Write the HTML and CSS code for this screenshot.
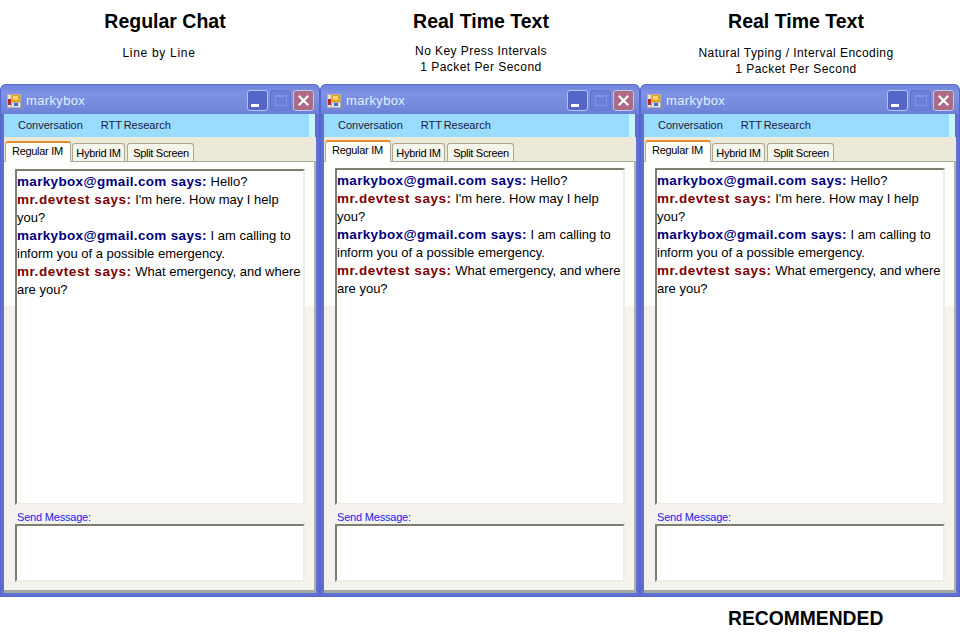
FILE: index.html
```html
<!DOCTYPE html>
<html lang="en">
<head>
<meta charset="utf-8">
<title>Chat comparison</title>
<link rel="stylesheet" href="styles.css">
</head>
<body>
<svg class="defs" width="0" height="0" aria-hidden="true">
  <symbol id="app" viewBox="0 0 14 14">
    <rect x="0" y="0" width="14" height="14" fill="#b9b4a8"/>
    <rect x="1" y="1" width="3" height="12" fill="#e6e2d8"/>
    <rect x="1" y="5" width="3" height="6" fill="#b52a2a"/>
    <rect x="5" y="1" width="8" height="7" fill="#e8a020"/>
    <rect x="6" y="2" width="5" height="4" fill="#fbd77a"/>
    <rect x="5" y="9" width="8" height="4" fill="#dfe4ef"/>
    <rect x="7" y="9" width="4" height="3" fill="#3f6fd0"/>
  </symbol>
</svg>
<main class="page">
  <section class="col col-a">
    <header class="head"><h1>Regular Chat</h1><p>Line by Line</p></header>
    <div class="window">
      <div class="titlebar">
        <svg class="appicon"><use href="#app"/></svg><span class="title">markybox</span>
        <span class="ctl ctl-min"><i></i></span><span class="ctl ctl-max"><i></i></span>
        <span class="ctl ctl-close"><svg viewBox="0 0 20 20"><path d="M5 5L15 15M15 5L5 15"/></svg></span>
      </div>
      <nav class="menubar"><span>Conversation</span><span>RTT Research</span><b></b></nav>
      <div class="tabs"><span class="tab on">Regular IM</span><span class="tab">Hybrid IM</span><span class="tab">Split Screen</span></div>
      <div class="panel">
        <div class="box log">
          <p><b class="me">markybox@gmail.com says:</b> Hello?</p>
          <p><b class="them">mr.devtest says:</b> I'm here. How may I help you?</p>
          <p><b class="me">markybox@gmail.com says:</b> I am calling to inform you of a possible emergency.</p>
          <p><b class="them">mr.devtest says:</b> What emergency, and where are you?</p>
        </div>
        <label class="send">Send Message:</label>
        <div class="box input"></div>
      </div>
    </div>
  </section>
  <section class="col col-b">
    <header class="head"><h1>Real Time Text</h1><p>No Key Press Intervals<br>1 Packet Per Second</p></header>
    <div class="window">
      <div class="titlebar">
        <svg class="appicon"><use href="#app"/></svg><span class="title">markybox</span>
        <span class="ctl ctl-min"><i></i></span><span class="ctl ctl-max"><i></i></span>
        <span class="ctl ctl-close"><svg viewBox="0 0 20 20"><path d="M5 5L15 15M15 5L5 15"/></svg></span>
      </div>
      <nav class="menubar"><span>Conversation</span><span>RTT Research</span><b></b></nav>
      <div class="tabs"><span class="tab on">Regular IM</span><span class="tab">Hybrid IM</span><span class="tab">Split Screen</span></div>
      <div class="panel">
        <div class="box log">
          <p><b class="me">markybox@gmail.com says:</b> Hello?</p>
          <p><b class="them">mr.devtest says:</b> I'm here. How may I help you?</p>
          <p><b class="me">markybox@gmail.com says:</b> I am calling to inform you of a possible emergency.</p>
          <p><b class="them">mr.devtest says:</b> What emergency, and where are you?</p>
        </div>
        <label class="send">Send Message:</label>
        <div class="box input"></div>
      </div>
    </div>
  </section>
  <section class="col col-c">
    <header class="head"><h1>Real Time Text</h1><p>Natural Typing / Interval Encoding<br>1 Packet Per Second</p></header>
    <div class="window">
      <div class="titlebar">
        <svg class="appicon"><use href="#app"/></svg><span class="title">markybox</span>
        <span class="ctl ctl-min"><i></i></span><span class="ctl ctl-max"><i></i></span>
        <span class="ctl ctl-close"><svg viewBox="0 0 20 20"><path d="M5 5L15 15M15 5L5 15"/></svg></span>
      </div>
      <nav class="menubar"><span>Conversation</span><span>RTT Research</span><b></b></nav>
      <div class="tabs"><span class="tab on">Regular IM</span><span class="tab">Hybrid IM</span><span class="tab">Split Screen</span></div>
      <div class="panel">
        <div class="box log">
          <p><b class="me">markybox@gmail.com says:</b> Hello?</p>
          <p><b class="them">mr.devtest says:</b> I'm here. How may I help you?</p>
          <p><b class="me">markybox@gmail.com says:</b> I am calling to inform you of a possible emergency.</p>
          <p><b class="them">mr.devtest says:</b> What emergency, and where are you?</p>
        </div>
        <label class="send">Send Message:</label>
        <div class="box input"></div>
      </div>
    </div>
    <footer class="rec">RECOMMENDED</footer>
  </section>
</main>
</body>
</html>
```
FILE: styles.css
```css
* { box-sizing: border-box; }
html, body { margin: 0; padding: 0; background: #fff; }
body { width: 960px; height: 640px; overflow: hidden; font-family: "Liberation Sans", Arial, sans-serif; color: #000; }
.defs { position: absolute; }
.page { display: flex; width: 960px; }
.col { width: 320px; flex: none; }
.head { height: 84px; padding-top: 10px; text-align: center; }
.col-a .head { padding-left: 10px; }
.col-b .head { padding-left: 2px; }
.col-c .head { margin-right: 8px; }
.head h1 { margin: 0; font-size: 19.5px; line-height: 23px; font-weight: bold; }
.head p { margin: 12px 0 0; font-size: 12px; line-height: 16px; letter-spacing: .45px; }
.col-a .head p { margin-right: 12px; letter-spacing: .7px; }
.col-b .head p { margin-top: 10px; }

.window { width: 320px; height: 513px; display: flex; flex-direction: column; background: #5f6fd3; border-radius: 6px 6px 0 0; padding: 0 2px 0 0; border-left: 1px solid #5566cc; border-right: 1px solid #5566cc; border-bottom: 1px solid #5566cc; }
.titlebar { height: 30px; flex: none; display: flex; align-items: center; padding: 2px 5px 0 6px; color: #fff; background: linear-gradient(#6f83dc 0, #7f92e2 30%, #7489dc 75%, #6d80d8 100%); border-top: 1px solid #5f72d4; margin-right: -2px; border-radius: 6px 6px 0 0; }
.appicon { width: 14px; height: 14px; flex: none; }
.title { margin-left: 5px; font-size: 13px; letter-spacing: .35px; color: #dff0ff; flex: 1; }
.ctl { width: 21px; height: 21px; margin-left: 2px; flex: none; border-radius: 3px; display: flex; align-items: center; justify-content: center; border: 1px solid #a9c8f4; }
.ctl-min { background: #5566c8; }
.ctl-min i { width: 8px; height: 3px; background: #fff; margin: 9px 6px 0 0; }
.ctl-max { background: #6b7fd6; border-color: #6175d0; }
.ctl-max i { width: 12px; height: 11px; border: 1px solid #7f93de; border-top-width: 2px; }
.ctl-close { background: #ab6c84; border-color: #b8c6ec; }
.ctl-close svg { width: 19px; height: 19px; fill: none; stroke: #fff; stroke-width: 2.4; }

.menubar { height: 23px; flex: none; display: flex; align-items: center; margin-left: 3px; margin-right: 2px; padding: 0 0 2px 14px; gap: 18px; background: #99dcff; font-size: 11px; word-spacing: -1.2px; color: #1a1a3a; position: relative; }
.menubar b { position: absolute; right: 0; top: 0; width: 6px; height: 100%; background: #c8f2ff; }
.tabs { height: 24px; flex: none; display: flex; align-items: flex-end; margin-left: 3px; margin-right: 1px; padding-left: 1px; background: #ece9d8; gap: 1px; font-size: 11px; letter-spacing: -.3px; }
.tab { height: 18px; padding: 0 3.5px; display: flex; align-items: center; border: 1px solid #a9a999; border-bottom: 0; border-radius: 3px 3px 0 0; background: #f5f4ea; }
.tab:last-child { margin-left: 1px; padding: 0 4px 0 5px; }
.tab.on { height: 21px; padding: 0 7px 3px 6px; background: #fdfdfb; border-top: 2px solid #e68b2c; border-color: #e68b2c #a9a999 #a9a999; margin-bottom: -1px; position: relative; }
.col-b .tab.on, .col-c .tab.on { height: 22px; padding-bottom: 4px; }
.panel { flex: 1; margin: 0 1px 3px 3px; padding: 7px 9px 8px 11px; display: flex; flex-direction: column; border-top: 1px solid #a9a999; border-right: 2px solid #b3b3a6; border-bottom: 3px solid #a5a89f; background: linear-gradient(#fdfdfb 0, #fdfdfb 144px, #f3f2ec 144px); }
.col-b .panel, .col-c .panel { padding-top: 6px; }
.box { background: #fff; border: 2px solid; border-color: #7f7d6f #efede4 #efede4 #7f7d6f; }
.log { flex: 1; padding: 2px 0 0; font-size: 13px; line-height: 18px; }
.log p { margin: 0; }
.log b { font-size: 13.5px; letter-spacing: .33px; }
.log .them { letter-spacing: .55px; }
.me { color: #000080; }
.them { color: #800000; }
.send { display: block; height: 19px; flex: none; padding: 5px 0 0 2px; font-size: 11px; letter-spacing: -.2px; line-height: 14px; color: #1a1aff; }
.input { height: 58px; flex: none; }
.rec { margin-top: 11px; padding-left: 88px; font-size: 19.3px; line-height: 22px; font-weight: bold; }
```
